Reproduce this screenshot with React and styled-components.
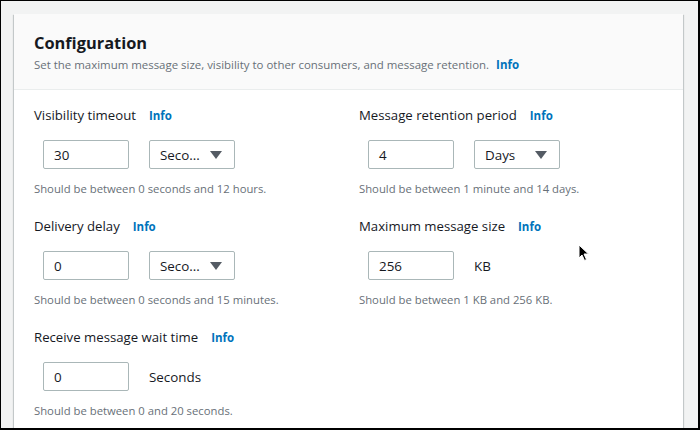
import React from 'react'
import styled, {createGlobalStyle} from 'styled-components'

const Global = createGlobalStyle`
    html, body {
        margin: 0;
        padding: 0;
        background: #f2f3f3;
    }
    body {
        font-family: 'Open Sans', 'Noto Sans', Arial, sans-serif;
        color: #16191f;
    }
`

const fields = [
    {label: 'Visibility timeout', value: '30', unit: 'Seco...', select: true, hint: 'Should be between 0 seconds and 12 hours.'},
    {label: 'Message retention period', value: '4', unit: 'Days', select: true, hint: 'Should be between 1 minute and 14 days.'},
    {label: 'Delivery delay', value: '0', unit: 'Seco...', select: true, hint: 'Should be between 0 seconds and 15 minutes.'},
    {label: 'Maximum message size', value: '256', unit: 'KB', hint: 'Should be between 1 KB and 256 KB.'},
    {label: 'Receive message wait time', value: '0', unit: 'Seconds', hint: 'Should be between 0 and 20 seconds.'},
]

export default function App() {
    return (
        <Screen>
            <Global/>
            <Card>
                <Header>
                    <Title>Configuration</Title>
                    <Description>
                        Set the maximum message size, visibility to other consumers, and message retention.
                        <Info $gap={7}>Info</Info>
                    </Description>
                </Header>
                <Body>
                    {fields.map(f => (
                        <Field key={f.label}>
                            <Label>{f.label}<Info $gap={13}>Info</Info></Label>
                            <Controls>
                                <TextInput>{f.value}</TextInput>
                                {f.select ? (
                                    <Select>
                                        <span>{f.unit}</span>
                                        <Caret viewBox="0 0 12 10"><path d="M0 1h12L6 9z" fill="#545b64"/></Caret>
                                    </Select>
                                ) : (
                                    <Unit>{f.unit}</Unit>
                                )}
                            </Controls>
                            <Hint>{f.hint}</Hint>
                        </Field>
                    ))}
                </Body>
            </Card>
            <Pointer viewBox="0 0 12 18">
                <path d="M1 1v13l3-3 2.5 5.5 2-1L6 10h4.5z" fill="#000" stroke="#fff" strokeWidth="1"/>
            </Pointer>
        </Screen>
    )
}

const Screen = styled.div`
    position: relative;
    width: 700px;
    height: 430px;
    box-sizing: border-box;
    border-top: 1px solid #000;
    border-left: 1px solid #000;
    border-right: 2px solid #000;
    border-bottom: 2px solid #000;
    padding: 13px 14px 0 13px;
    overflow: hidden;
    background: #f2f3f3;
`
const Card = styled.div`
    background: #fff;
    width: 669px;
    height: 500px;
    box-shadow: 0 1px 1px 0 rgba(0,28,36,.3), 1px 1px 1px 0 rgba(0,28,36,.15), -1px 1px 1px 0 rgba(0,28,36,.15);
`
const Header = styled.div`
    background: #fafafa;
    border-bottom: 1px solid #eaeded;
    height: 76px;
    box-sizing: border-box;
    padding: 17px 20px 0 20px;
`
const Title = styled.h2`
    margin: 0;
    font-size: 16.4px;
    line-height: 24px;
    font-weight: 700;
    color: #16191f;
`
const Description = styled.div`
    font-size: 11.45px;
    line-height: 18px;
    color: #687078;
    margin-top: 1px;
`
const Info = styled.span`
    margin-left: ${p => p.$gap}px;
    font-size: 11.5px;
    font-weight: 700;
    color: #0073bb;
`
const Body = styled.div`
    display: grid;
    grid-template-columns: 305px 305px;
    column-gap: 20px;
    row-gap: 19px;
    padding: 15px 20px 0 20px;
`
const Field = styled.div`
    display: flex;
    flex-direction: column;
`
const Label = styled.div`
    font-size: 13.2px;
    line-height: 20px;
    color: #16191f;
`
const Controls = styled.div`
    display: flex;
    align-items: center;
    gap: 20px;
    margin-top: 14px;
    padding-left: 9px;
`
const TextInput = styled.div`
    box-sizing: border-box;
    width: 86px;
    height: 29px;
    border: 1px solid #aab7b8;
    border-radius: 2px;
    padding: 0 10px;
    display: flex;
    align-items: center;
    font-size: 13.4px;
    color: #16191f;
`
const Select = styled(TextInput)`
    justify-content: space-between;
    padding-right: 12px;
`
const Caret = styled.svg`
    width: 12px;
    height: 10px;
`
const Unit = styled.span`
    font-size: 13.4px;
    color: #16191f;
`
const Hint = styled.div`
    margin-top: 12px;
    font-size: 11.3px;
    line-height: 16px;
    color: #687078;
`
const Pointer = styled.svg`
    position: absolute;
    left: 577px;
    top: 243px;
    width: 12px;
    height: 18px;
`
